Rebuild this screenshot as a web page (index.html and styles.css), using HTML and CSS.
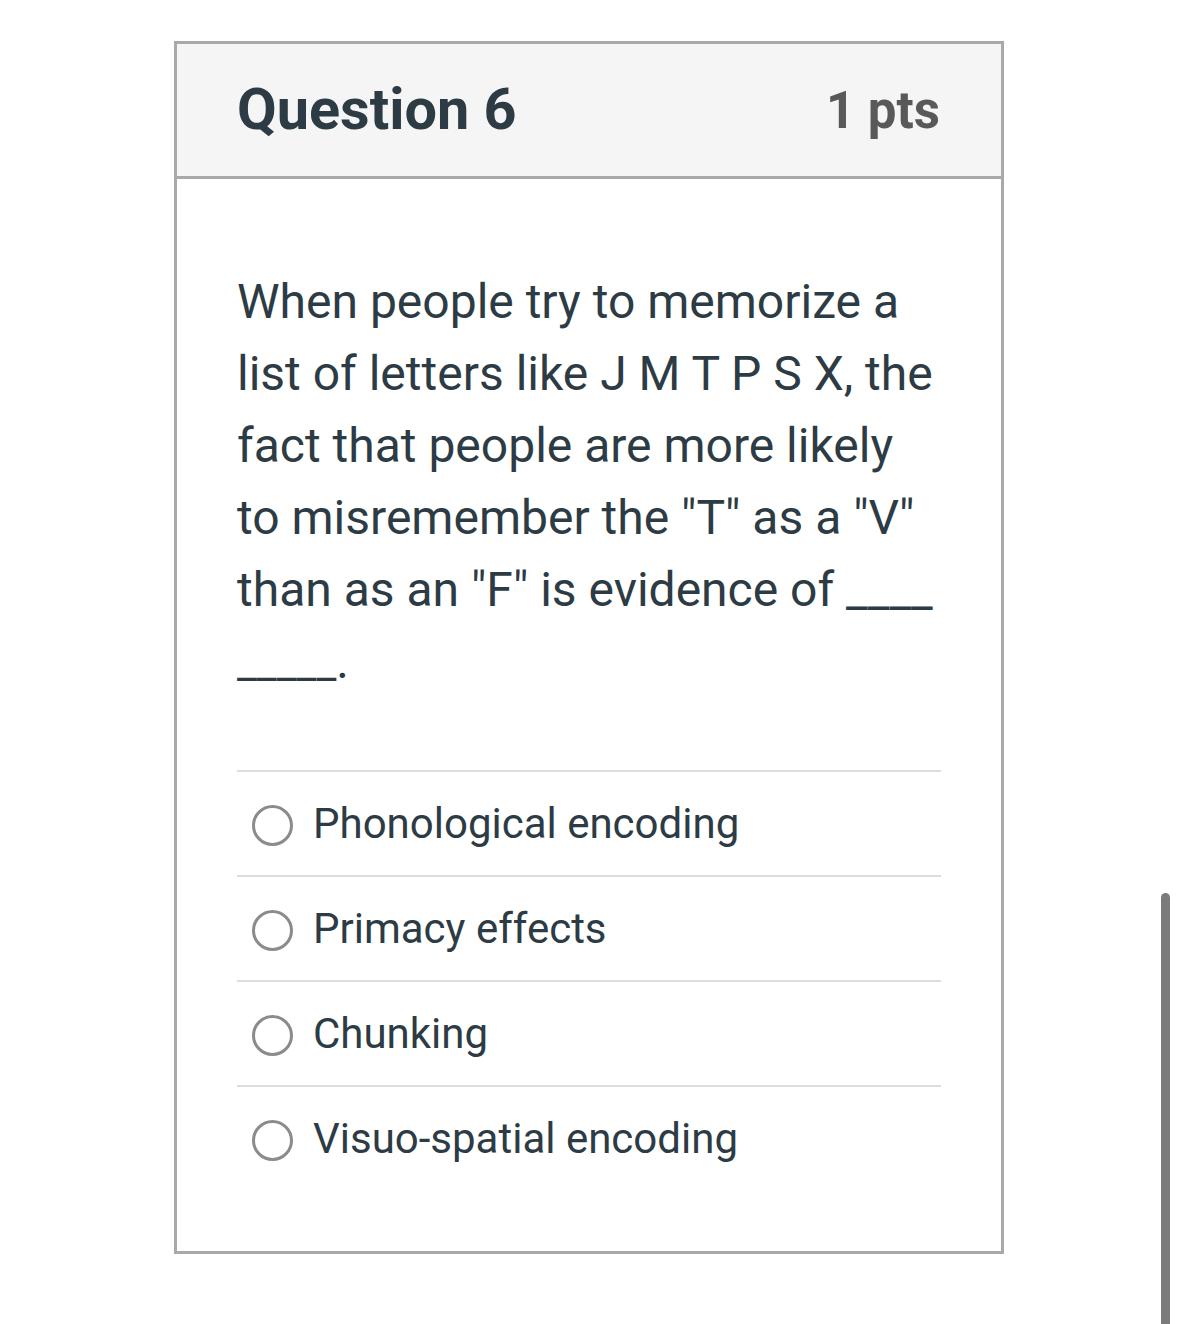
FILE: index.html
```html
<!DOCTYPE html>
<html>
<head>
<meta charset="utf-8">
<link rel="stylesheet" href="styles.css">
</head>
<body>
<div class="page">
  <div class="card">
    <div class="card-header">
      <h2 class="title">Question 6</h2>
      <div class="pts">1 pts</div>
    </div>
    <div class="card-body">
      <p class="question">When people try to memorize a list of letters like J M T P S X, the fact that people are more likely to misremember the "T" as a "V" than as an "F" is evidence of ____ <span class="blank">_____</span>.</p>
      <div class="answers">
        <label class="answer"><span class="radio"></span><span class="label">Phonological encoding</span></label>
        <label class="answer"><span class="radio"></span><span class="label">Primacy effects</span></label>
        <label class="answer"><span class="radio"></span><span class="label">Chunking</span></label>
        <label class="answer"><span class="radio"></span><span class="label">Visuo-spatial encoding</span></label>
      </div>
    </div>
  </div>
</div>
<div class="scrollbar"></div>
</body>
</html>
```
FILE: styles.css
```css
html, body {
  margin: 0;
  padding: 0;
  background: #ffffff;
}
body {
  font-family: Roboto, "Liberation Sans", sans-serif;
  color: #2d3b45;
}
.page {
  padding: 41px 0 0 174px;
}
.card {
  width: 830px;
  box-sizing: border-box;
  border: 3px solid #a9a9a9;
}
.card-header {
  background: #f5f5f5;
  border-bottom: 3px solid #a9a9a9;
  height: 132px;
  padding: 0 61px 0 60px;
  display: flex;
  align-items: center;
  justify-content: space-between;
}
.title {
  margin: 0;
  font-size: 57.6px;
  font-weight: 700;
  color: #2d3b45;
  line-height: 1;
}
.pts {
  font-size: 51px;
  font-weight: 700;
  color: #595959;
  line-height: 1;
}
.card-body {
  padding: 87px 60px 61px 60px;
}
.question {
  margin: 0;
  font-size: 48px;
  line-height: 72px;
}
.blank {
  font-size: 44px;
  line-height: 1;
}
.answers {
  margin-top: 72px;
}
.answer {
  display: flex;
  align-items: center;
  height: 103px;
  border-top: 2px solid #dddddd;
  padding-left: 15px;
  gap: 20px;
}
.radio {
  width: 41px;
  height: 41px;
  box-sizing: border-box;
  border: 3.5px solid #8b8b8d;
  border-radius: 50%;
  flex: none;
  margin-top: 3px;
}
.label {
  font-size: 42px;
}
.scrollbar {
  position: fixed;
  left: 1161px;
  top: 893px;
  width: 9px;
  bottom: 0;
  background: #7b7b7b;
  border-radius: 5px 5px 0 0;
}
```
